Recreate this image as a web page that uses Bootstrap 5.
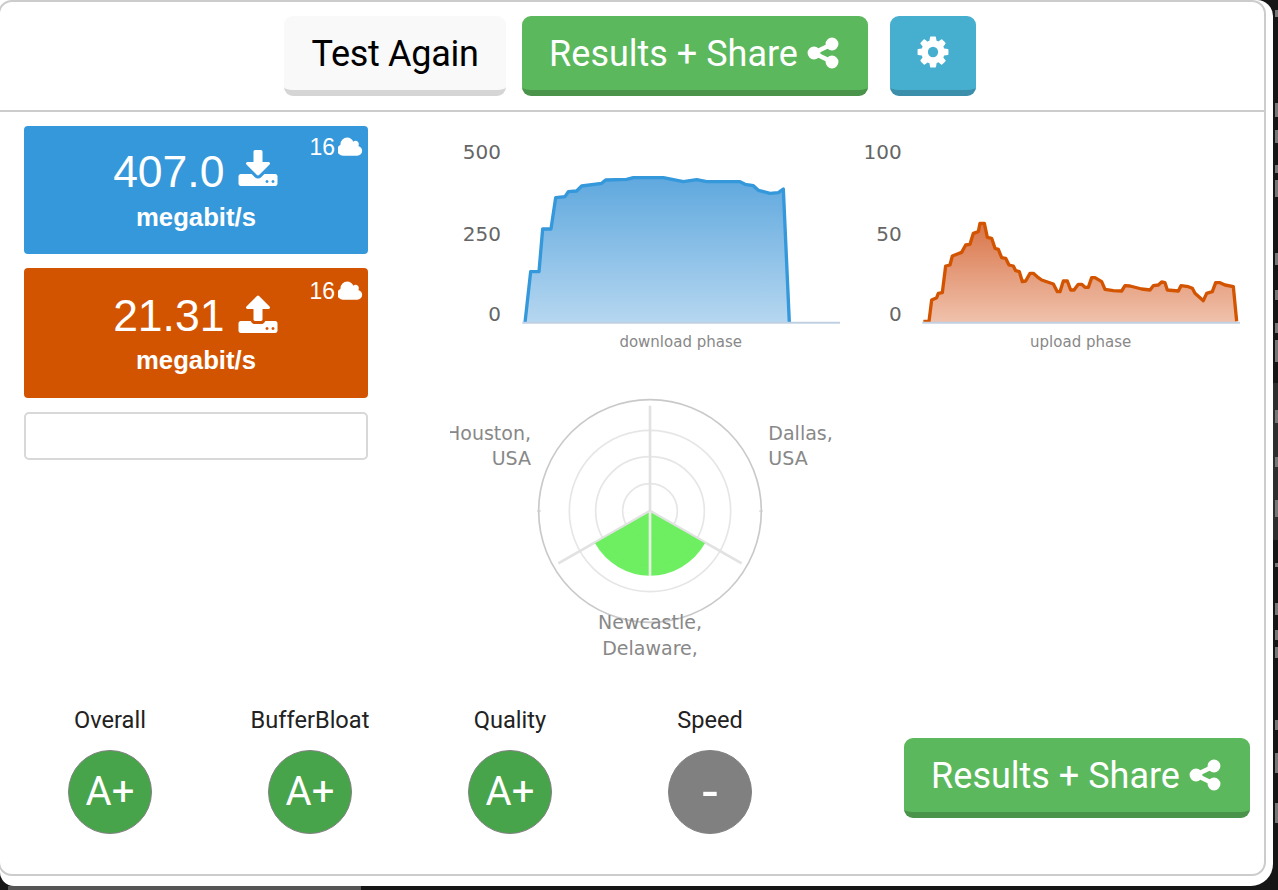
<!DOCTYPE html>
<html lang="en">
<head>
  <meta charset="UTF-8">
  <meta name="viewport" content="width=device-width, initial-scale=1.0">
  <title>Speed test</title>
  <link href="https://cdn.jsdelivr.net/npm/bootstrap@5.3.0/dist/css/bootstrap.min.css" rel="stylesheet">
  <style>
    html, body {
      height: 890px;
      overflow: hidden;
    }
    body {
      background-color: #161616;
      font-family: Roboto, sans-serif;
    }
    .shell {
      width: 1273px;
      height: 886px;
      background-color: #fff;
      border-radius: 0 16px 22px 14px;
    }
    .panel-box {
      width: 1268px;
      height: 876px;
      margin-left: -2px;
      border: 2px solid #ccc;
      border-radius: 14px;
    }
    .top-bar {
      height: 110px;
      padding: 14px 4px 0 0;
      border-bottom: 2px solid #ccc;
    }
    .btn-big {
      height: 80px;
      padding: 0;
      font-family: Roboto, sans-serif;
      font-size: 36px;
      line-height: 76px;
      border: 0;
      border-bottom: 6px solid;
      border-radius: 9px;
      color: #fff;
    }
    .btn-big:hover { color: #fff; }
    .btn-test {
      width: 222px;
      margin-right: 16px;
      background-color: #f9f9f9;
      border-color: #d5d5d5;
      color: #000;
      letter-spacing: -.3px;
    }
    .btn-test:hover { background-color: #f9f9f9; color: #000; border-color: #d5d5d5; }
    .btn-results {
      width: 346px;
      background-color: #5cb85c;
      border-color: #4a934a;
    }
    .btn-results:hover { background-color: #5cb85c; border-color: #4a934a; }
    .btn-gear {
      width: 86px;
      margin-left: 22px;
      background-color: #46afd0;
      border-color: #3b8fab;
    }
    .btn-gear:hover { background-color: #46afd0; border-color: #3b8fab; }
    .ico-share { width: 36px; height: 36px; margin-left: -2px; fill: currentColor; vertical-align: -5px; }
    .ico-gear { width: 36px; height: 36px; fill: #fff; vertical-align: -4px; }

    .left-col {
      width: 344px;
      margin-left: 24px;
      padding-top: 14px;
    }
    .speed-box {
      position: relative;
      height: 128px;
      margin-bottom: 14px;
      border-radius: 4px;
      color: #fff;
      text-align: center;
      font-family: "Liberation Sans", Arial, sans-serif;
    }
    .speed-down { background-color: #3498db; }
    .speed-up { background-color: #d35400; height: 130px; }
    .speed-num {
      padding-top: 21px;
      font-size: 44.5px;
      line-height: 50px;
    }
    .speed-up .speed-num { padding-top: 23px; }
    .speed-unit {
      margin-top: 2px;
      font-size: 25.7px;
      font-weight: 700;
      line-height: 36px;
    }
    .speed-up .speed-unit { margin-top: 1px; }
    .speed-ico { width: 42px; height: 42px; fill: #fff; vertical-align: -5px; }
    .thread-tag {
      position: absolute;
      top: 6px;
      right: 5px;
      display: flex;
      align-items: center;
      font-size: 23px;
      line-height: 30px;
    }
    .speed-up .thread-tag { top: 8px; }
    .thread-tag svg { width: 25px; height: 25px; margin-left: 3px; fill: #fff; }
    .empty-box {
      height: 48px;
      border: 2px solid #d8d8d8;
      border-radius: 5px;
    }

    .chart-area {
      margin-left: 72px;
      padding-top: 18px;
    }
    .chart-area svg { display: block; }
    .chart-text { font-family: "DejaVu Sans", sans-serif; }
    .polar-wrap { margin-top: 30px; }

    .grade-row {
      margin-top: 36px;
    }
    .grade-item {
      width: 200px;
      text-align: center;
      font-size: 23.6px;
      line-height: 28px;
      color: #222;
    }
    .grade-item:first-child { margin-left: 10px; }
    .grade-dot {
      width: 84px;
      height: 84px;
      margin: 16px auto 0;
      border-radius: 50%;
      background-color: #48a44b;
      border: 1px solid #808080;
      color: #fff;
      font-size: 40px;
      line-height: 82px;
    }
    .grade-none { background-color: #808080; font-size: 56px; }
    .btn-bottom {
      margin: 32px 0 0 94px;
    }
    .foot-strip {
      height: 4px;
      width: 353px;
      margin-left: 8px;
      background-color: #555;
    }
  </style>
</head>
<body>
  <svg width="0" height="0" class="d-block">
    <symbol id="share" viewBox="0 0 1792 1792"><path d="M1344 1024q133 0 226.5 93.5t93.5 226.5-93.5 226.5-226.5 93.5-226.5-93.5-93.5-226.5q0-12 2-34l-360-180q-92 86-218 86-133 0-226.5-93.5t-93.5-226.5 93.5-226.5 226.5-93.5q126 0 218 86l360-180q-2-22-2-34 0-133 93.5-226.5t226.5-93.5 226.5 93.5 93.5 226.5-93.5 226.5-226.5 93.5q-126 0-218-86l-360 180q2 22 2 34t-2 34l360 180q92-86 218-86z"/></symbol>
    <symbol id="cloud" viewBox="0 0 1920 1792"><path d="M1856 1152q0 159-112.5 271.5t-271.5 112.5h-1088q-185 0-316.5-131.5t-131.5-316.5q0-132 71-241.5t187-163.5q-2-28-2-43 0-212 150-362t362-150q158 0 286.5 88t187.5 230q70-62 166-62 106 0 181 75t75 181q0 75-41 138 129 30 213 134.5t84 239.5z"/></symbol>
  </svg>

  <div class="d-flex">
    <div>
      <div class="shell">
        <div class="panel-box">
          <div class="top-bar d-flex justify-content-center">
            <button type="button" class="btn btn-big btn-test">Test Again</button>
            <button type="button" class="btn btn-big btn-results">Results + Share <svg class="ico-share"><use href="#share"/></svg></button>
            <button type="button" class="btn btn-big btn-gear">
              <svg class="ico-gear" viewBox="0 0 1792 1792"><path d="M1152 896q0-106-75-181t-181-75-181 75-75 181 75 181 181 75 181-75 75-181zm512-109v222q0 12-8 23t-20 13l-185 28q-19 54-39 91 35 50 107 138 10 12 10 25t-9 23q-27 37-99 108t-94 71q-12 0-26-9l-138-108q-44 23-91 38-16 136-29 186-7 28-36 28h-222q-14 0-24.5-8.5t-11.5-21.5l-28-184q-49-16-90-37l-141 107q-10 9-25 9-14 0-25-11-126-114-165-168-7-10-7-23 0-12 8-23 15-21 51-66.5t54-70.5q-27-50-41-99l-183-27q-13-2-21-12.5t-8-23.5v-222q0-12 8-23t19-13l186-28q14-46 39-92-40-57-107-138-10-12-10-24 0-10 9-23 26-36 98.5-107.5t94.5-71.5q13 0 26 10l138 107q44-23 91-38 16-136 29-186 7-28 36-28h222q14 0 24.5 8.5t11.5 21.5l28 184q49 16 90 37l142-107q9-9 24-9 13 0 25 10 129 119 165 170 7 8 7 22 0 12-8 23-15 21-51 66.5t-54 70.5q26 50 41 98l183 28q13 2 21 12.5t8 23.5z"/></svg>
            </button>
          </div>

          <div class="d-flex">
            <div class="left-col">
              <div class="speed-box speed-down">
                <div class="thread-tag">16<svg><use href="#cloud"/></svg></div>
                <div class="speed-num">407.0
                  <svg class="speed-ico" viewBox="0 0 1792 1792"><path d="M1344 1344q0-26-19-45t-45-19-45 19-19 45 19 45 45 19 45-19 19-45zm256 0q0-26-19-45t-45-19-45 19-19 45 19 45 45 19 45-19 19-45zm128-224v320q0 40-28 68t-68 28h-1472q-40 0-68-28t-28-68v-320q0-40 28-68t68-28h465l135 136q58 56 136 56t136-56l136-136h464q40 0 68 28t28 68zm-325-569q17 41-14 70l-448 448q-18 19-45 19t-45-19l-448-448q-31-29-14-70 17-39 59-39h256v-448q0-26 19-45t45-19h256q26 0 45 19t19 45v448h256q42 0 59 39z"/></svg>
                </div>
                <div class="speed-unit">megabit/s</div>
              </div>
              <div class="speed-box speed-up">
                <div class="thread-tag">16<svg><use href="#cloud"/></svg></div>
                <div class="speed-num">21.31
                  <svg class="speed-ico" viewBox="0 0 1792 1792"><path d="M1344 1472q0-26-19-45t-45-19-45 19-19 45 19 45 45 19 45-19 19-45zm256 0q0-26-19-45t-45-19-45 19-19 45 19 45 45 19 45-19 19-45zm128-224v320q0 40-28 68t-68 28h-1472q-40 0-68-28t-28-68v-320q0-40 28-68t68-28h427q21 56 70.5 92t110.5 36h256q61 0 110.5-36t70.5-92h427q40 0 68 28t28 68zm-325-648q-17 40-59 40h-256v448q0 26-19 45t-45 19h-256q-26 0-45-19t-19-45v-448h-256q-42 0-59-40-17-39 14-69l448-448q18-19 45-19t45 19l448 448q31 30 14 69z"/></svg>
                </div>
                <div class="speed-unit">megabit/s</div>
              </div>
              <div class="empty-box"></div>
            </div>

            <div class="chart-area">
              <div class="d-flex">
                <svg class="chart-text" width="410" height="230" viewBox="0 0 1230 690">
                  <defs>
                    <linearGradient id="downFill" x1="0" y1="0" x2="0" y2="1">
                      <stop offset="0" stop-color="#5fa8de"/>
                      <stop offset="1" stop-color="#b6d7f0"/>
                    </linearGradient>
                    <linearGradient id="upFill" x1="0" y1="0" x2="0" y2="1">
                      <stop offset="0" stop-color="#d9754a"/>
                      <stop offset="1" stop-color="#f0c2ac"/>
                    </linearGradient>
                  </defs>
                  <g fill="#666" font-size="60" text-anchor="end">
                    <text x="183" y="88">500</text>
                    <text x="183" y="333">250</text>
                    <text x="183" y="573">0</text>
                  </g>
                  <text x="722" y="652" fill="#888" font-size="45" text-anchor="middle">download phase</text>
                  <path fill="url(#downFill)" d="M255 578L272 425L297 425L308 297L333 297L347 203L375 200L385 185L410 183L425 168L485 160L497 150L560 148L580 143L670 143L730 155L770 149L800 155L900 155L915 163L940 167L955 181L990 190L1015 188L1030 177L1048 578Z"/>
                  <path fill="none" stroke="#3498db" stroke-width="10" stroke-linejoin="round" d="M255 578L272 425L297 425L308 297L333 297L347 203L375 200L385 185L410 183L425 168L485 160L497 150L560 148L580 143L670 143L730 155L770 149L800 155L900 155L915 163L940 167L955 181L990 190L1015 188L1030 177L1048 578"/>
                  <line x1="247" y1="578" x2="1200" y2="578" stroke="#c0d0e3" stroke-width="6"/>
                </svg>
                <svg class="chart-text" width="410" height="230" viewBox="0 0 1230 690">
                  <g fill="#666" font-size="60" text-anchor="end">
                    <text x="155" y="88">100</text>
                    <text x="155" y="333">50</text>
                    <text x="155" y="573">0</text>
                  </g>
                  <text x="692" y="652" fill="#888" font-size="45" text-anchor="middle">upload phase</text>
                  <path fill="url(#upFill)" d="M220 578L237 574L245 510L260 503L265 490L277 488L287 408L300 405L307 378L335 367L347 345L360 343L370 310L385 305L390 280L403 280L412 322L425 325L435 355L445 358L455 383L467 385L477 405L490 408L497 422L508 425L517 455L527 453L540 430L550 430L565 443L575 450L610 462L622 485L630 485L640 453L652 453L662 480L672 480L685 463L695 463L705 472L715 472L725 443L735 443L755 455L765 478L790 482L815 483L825 467L840 468L875 477L900 480L910 467L925 465L935 456L945 458L952 480L985 483L993 467L1015 470L1027 475L1035 490L1060 512L1070 490L1087 485L1097 458L1110 458L1125 465L1150 470L1160 578Z"/>
                  <path fill="none" stroke="#d35400" stroke-width="10" stroke-linejoin="round" d="M220 574L237 574L245 510L260 503L265 490L277 488L287 408L300 405L307 378L335 367L347 345L360 343L370 310L385 305L390 280L403 280L412 322L425 325L435 355L445 358L455 383L467 385L477 405L490 408L497 422L508 425L517 455L527 453L540 430L550 430L565 443L575 450L610 462L622 485L630 485L640 453L652 453L662 480L672 480L685 463L695 463L705 472L715 472L725 443L735 443L755 455L765 478L790 482L815 483L825 467L840 468L875 477L900 480L910 467L925 465L935 456L945 458L952 480L985 483L993 467L1015 470L1027 475L1035 490L1060 512L1070 490L1087 485L1097 458L1110 458L1125 465L1150 470L1160 574"/>
                  <line x1="217" y1="578" x2="1170" y2="578" stroke="#c0d0e3" stroke-width="6"/>
                </svg>
              </div>

              <div class="polar-wrap">
                <svg class="chart-text" width="420" height="280" viewBox="0 0 1260 840">
                  <defs>
                    <clipPath id="polarClip"><rect x="30" y="0" width="1230" height="828"/></clipPath>
                  </defs>
                  <g clip-path="url(#polarClip)">
                    <g fill="none">
                      <circle cx="630" cy="363" r="334" stroke="#c9c9c9" stroke-width="5"/>
                      <circle cx="630" cy="363" r="242" stroke="#e6e6e6" stroke-width="5"/>
                      <circle cx="630" cy="363" r="163" stroke="#e6e6e6" stroke-width="5"/>
                      <circle cx="630" cy="363" r="82" stroke="#e6e6e6" stroke-width="5"/>
                    </g>
                    <g stroke="#e2e2e2" stroke-width="8">
                      <line x1="630" y1="363" x2="630" y2="47"/>
                      <line x1="630" y1="363" x2="905" y2="520"/>
                      <line x1="630" y1="363" x2="355" y2="520"/>
                    </g>
                    <line x1="292" y1="363" x2="302" y2="363" stroke="#ccc" stroke-width="4"/>
                    <line x1="958" y1="363" x2="968" y2="363" stroke="#ccc" stroke-width="4"/>
                    <path fill="#66ee58" fill-opacity=".95" d="M630 366L795 460A191 191 0 0 1 630 557A191 191 0 0 1 465 460Z"/>
                    <line x1="630" y1="366" x2="630" y2="558" stroke="#e6f3e4" stroke-width="8"/>
                    <g fill="#888" font-size="57">
                      <text x="273" y="150" text-anchor="end">Houston,</text>
                      <text x="273" y="226" text-anchor="end">USA</text>
                      <text x="985" y="150">Dallas,</text>
                      <text x="985" y="226">USA</text>
                      <text x="630" y="716" text-anchor="middle">Newcastle,</text>
                      <text x="630" y="795" text-anchor="middle">Delaware,</text>
                    </g>
                  </g>
                </svg>
              </div>
            </div>
          </div>

          <div class="grade-row d-flex">
            <div class="grade-item">Overall<div class="grade-dot">A+</div></div>
            <div class="grade-item">BufferBloat<div class="grade-dot">A+</div></div>
            <div class="grade-item">Quality<div class="grade-dot">A+</div></div>
            <div class="grade-item">Speed<div class="grade-dot grade-none">-</div></div>
            <button type="button" class="btn btn-big btn-results btn-bottom">Results + Share <svg class="ico-share"><use href="#share"/></svg></button>
          </div>
        </div>
      </div>
      <div class="foot-strip"></div>
    </div>
    <!-- window behind the dialog, only its edge shows -->
    <svg width="5" height="890" class="d-block flex-shrink-0">
      <rect x="0" y="383" width="5" height="157" fill="#2e2e2e"/>
      <g fill="#777">
        <rect x="2" y="10" width="3" height="7"/>
        <rect x="2" y="103" width="3" height="14"/>
        <rect x="2" y="130" width="3" height="13"/>
        <rect x="2" y="165" width="3" height="8"/>
        <rect x="2" y="180" width="3" height="17"/>
        <rect x="2" y="253" width="3" height="12"/>
        <rect x="2" y="290" width="3" height="10"/>
        <rect x="2" y="323" width="3" height="10"/>
        <rect x="2" y="340" width="3" height="22"/>
        <rect x="2" y="410" width="3" height="13"/>
        <rect x="2" y="457" width="3" height="10"/>
        <rect x="2" y="500" width="3" height="17"/>
        <rect x="2" y="563" width="3" height="4"/>
        <rect x="2" y="603" width="3" height="12"/>
        <rect x="2" y="630" width="3" height="10"/>
        <rect x="2" y="647" width="3" height="11"/>
        <rect x="2" y="720" width="3" height="10"/>
        <rect x="2" y="753" width="3" height="20"/>
        <rect x="2" y="803" width="3" height="20"/>
      </g>
    </svg>
  </div>
  <script src="https://cdn.jsdelivr.net/npm/bootstrap@5.3.0/dist/js/bootstrap.bundle.min.js"></script>
</body>
</html>
